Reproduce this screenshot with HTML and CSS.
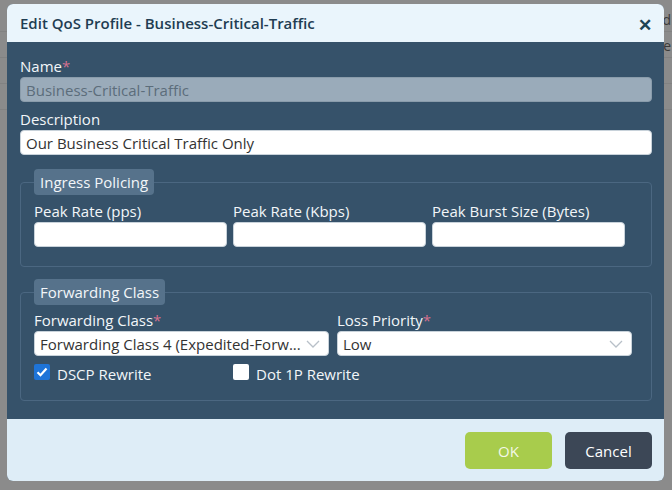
FILE: index.html
```html
<!DOCTYPE html>
<html lang="en">
<head>
    <meta charset="UTF-8">
    <title>Edit QoS Profile</title>
    <link rel="stylesheet" href="styles.css">
</head>
<body>
    <!-- page behind the modal -->
    <div class="backdrop">
        <div class="bg-row">d</div>
        <div class="bg-row">ce</div>
        <div class="bg-row"></div>
        <div class="bg-row"></div>
    </div>

    <div class="modal">
        <div class="modal-header">
            <span class="modal-title">Edit QoS Profile - Business-Critical-Traffic</span>
            <span class="close">&#x2715;</span>
        </div>

        <div class="modal-body">
            <label class="label">Name<span class="req">*</span></label>
            <input class="input disabled" type="text" value="Business-Critical-Traffic" disabled>

            <label class="label">Description</label>
            <input class="input" type="text" value="Our Business Critical Traffic Only">

            <fieldset class="group">
                <legend class="legend">Ingress Policing</legend>
                <div class="cols three">
                    <div class="field">
                        <label class="label">Peak Rate (pps)</label>
                        <input class="input" type="text">
                    </div>
                    <div class="field">
                        <label class="label">Peak Rate (Kbps)</label>
                        <input class="input" type="text">
                    </div>
                    <div class="field">
                        <label class="label">Peak Burst Size (Bytes)</label>
                        <input class="input" type="text">
                    </div>
                </div>
            </fieldset>

            <fieldset class="group fwd">
                <legend class="legend">Forwarding Class</legend>
                <div class="cols two">
                    <div class="field">
                        <label class="label">Forwarding Class<span class="req">*</span></label>
                        <div class="select">
                            <span class="select-text">Forwarding Class 4 (Expedited-Forw...</span>
                            <svg class="chevron" width="14" height="8" viewBox="0 0 14 8"><path d="M1 1l6 6 6-6" fill="none" stroke="#b8c0c8" stroke-width="1.3"/></svg>
                        </div>
                    </div>
                    <div class="field">
                        <label class="label">Loss Priority<span class="req">*</span></label>
                        <div class="select">
                            <span class="select-text">Low</span>
                            <svg class="chevron" width="14" height="8" viewBox="0 0 14 8"><path d="M1 1l6 6 6-6" fill="none" stroke="#b8c0c8" stroke-width="1.3"/></svg>
                        </div>
                    </div>
                </div>
                <div class="checks">
                    <label class="check">
                        <span class="box checked">
                            <svg width="12" height="10" viewBox="0 0 12 10"><path d="M1.5 5.2l3 3L10.5 1.5" fill="none" stroke="#fff" stroke-width="2.2"/></svg>
                        </span>
                        DSCP Rewrite
                    </label>
                    <label class="check">
                        <span class="box"></span>
                        Dot 1P Rewrite
                    </label>
                </div>
            </fieldset>
        </div>

        <div class="modal-footer">
            <button class="btn ok">OK</button>
            <button class="btn cancel">Cancel</button>
        </div>
    </div>
</body>
</html>
```

FILE: styles.css
```css
* {
    box-sizing: border-box;
}

body {
    margin: 0;
    height: 490px;
    overflow: hidden;
    background-color: #8b8b8b;
    font-family: 'Open Sans', 'Segoe UI', Arial, sans-serif;
    position: relative;
}

/* page behind the overlay */
.backdrop {
    padding-top: 6px;
}

.bg-row {
    height: 26px;
    border-bottom: 1px solid #828282;
    color: #3a3a3a;
    font-size: 14px;
    line-height: 28px;
    text-align: right;
    padding-right: 1px;
    white-space: nowrap;
}

/* modal */
.modal {
    position: absolute;
    left: 7px;
    top: 4px;
    width: 657px;
    border-radius: 6px;
    overflow: hidden;
    background-color: #36526a;
}

.modal-header {
    height: 38px;
    background-color: #eaf5fc;
    display: flex;
    align-items: center;
    justify-content: space-between;
    padding: 0 12px 0 13px;
}

.modal-title {
    color: #1f3d52;
    font-size: 15px;
    font-weight: 600;
}

.close {
    color: #1d4356;
    font-size: 17px;
    font-weight: 700;
    margin-top: 3px;
}

.modal-body {
    padding: 13px 12px 18px 13px;
}

.label {
    display: block;
    color: #f2f6f9;
    font-size: 15px;
    line-height: 22px;
    height: 22px;
}

.req {
    color: #d4708f;
}

.input {
    display: block;
    width: 100%;
    height: 25px;
    border: 1px solid #c8d2da;
    border-radius: 4px;
    background-color: #fff;
    font-family: inherit;
    font-size: 15px;
    color: #333;
    padding: 0 5px;
    margin-bottom: 6px;
    outline: none;
}

.input.disabled {
    background-color: #9aabba;
    border-color: #8a9cab;
    color: #5c6d7b;
}

.group {
    border: 1px solid #4b6781;
    border-radius: 4px;
    margin: 14px 0 0;
    padding: 0 14px 19px 13px;
}

.group.fwd {
    margin-top: 12px;
    padding-bottom: 15px;
}

.legend {
    background-color: #56728b;
    color: #f2f6f9;
    font-size: 15px;
    line-height: 26px;
    height: 26px;
    padding: 0 6px;
    border-radius: 4px;
    margin-bottom: 5px;
}

.fwd .legend {
    margin-bottom: 4px;
}

.cols {
    display: grid;
    column-gap: 6px;
}

.cols.three {
    grid-template-columns: 193px 193px 193px;
}

.cols.two {
    grid-template-columns: 295px 295px;
    column-gap: 8px;
}

.field .input {
    margin-bottom: 0;
}

.select {
    height: 25px;
    background-color: #fff;
    border: 1px solid #c8d2da;
    border-radius: 4px;
    display: flex;
    align-items: center;
    justify-content: space-between;
    padding: 0 8px 0 5px;
    font-size: 15px;
    color: #333;
}

.select-text {
    white-space: nowrap;
}

.checks {
    display: flex;
    margin-top: 7px;
}

.check {
    display: flex;
    align-items: center;
    width: 199px;
    height: 22px;
    color: #f2f6f9;
    font-size: 15px;
    line-height: 22px;
}

.box {
    width: 16px;
    height: 16px;
    border-radius: 2px;
    background-color: #fff;
    margin-right: 7px;
    margin-top: -4px;
    display: flex;
    align-items: center;
    justify-content: center;
}

.box.checked {
    background-color: #1e74d8;
}

.modal-footer {
    height: 62px;
    background-color: #deedf7;
    display: flex;
    justify-content: flex-end;
    align-items: flex-start;
    padding: 13px 12px 0 0;
    gap: 13px;
}

.btn {
    width: 87px;
    height: 37px;
    border: none;
    border-radius: 5px;
    font-family: inherit;
    font-size: 15px;
    color: #fff;
    cursor: pointer;
}

.ok {
    background-color: #a8cc4c;
    color: #f3f8e8;
}

.cancel {
    background-color: #3c4756;
}
```
